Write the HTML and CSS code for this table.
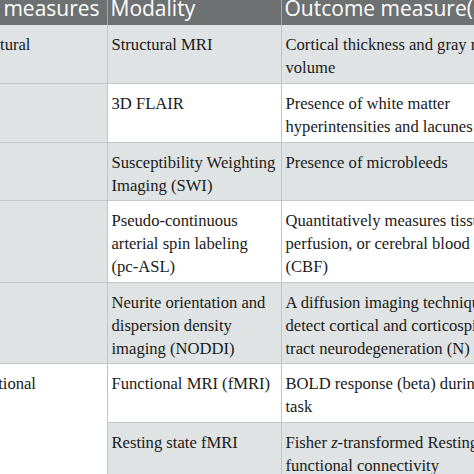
FILE: index.html
```html
<!DOCTYPE html>
<html>
<head>
<meta charset="utf-8">
<link rel="stylesheet" href="styles.css">
</head>
<body>
<div class="frame">
<table class="tbl">
  <colgroup>
    <col class="c1">
    <col class="c2">
    <col class="c3">
  </colgroup>
  <thead>
    <tr class="head">
      <th class="h1">Imaging measures</th>
      <th>Modality</th>
      <th>Outcome measure(s)</th>
    </tr>
  </thead>
  <tbody>
    <tr class="r1 shade">
      <td class="cat">Structural</td>
      <td>Structural MRI</td>
      <td>Cortical thickness and gray matter<br>volume</td>
    </tr>
    <tr class="r2">
      <td class="cat"></td>
      <td>3D FLAIR</td>
      <td>Presence of white matter<br>hyperintensities and lacunes</td>
    </tr>
    <tr class="r3 shade">
      <td class="cat"></td>
      <td>Susceptibility Weighting<br>Imaging (SWI)</td>
      <td>Presence of microbleeds</td>
    </tr>
    <tr class="r4">
      <td class="cat"></td>
      <td>Pseudo-continuous<br>arterial spin labeling<br>(pc-ASL)</td>
      <td>Quantitatively measures tissue<br>perfusion, or cerebral blood flow<br>(CBF)</td>
    </tr>
    <tr class="r5 shade">
      <td class="cat"></td>
      <td>Neurite orientation and<br>dispersion density<br>imaging (NODDI)</td>
      <td>A diffusion imaging technique to<br>detect cortical and corticospinal<br>tract neurodegeneration (N)</td>
    </tr>
    <tr class="r6">
      <td class="cat white" rowspan="2">Functional</td>
      <td>Functional MRI (fMRI)</td>
      <td>BOLD response (beta) during<br>task</td>
    </tr>
    <tr class="r7 shade">
      <td>Resting state fMRI</td>
      <td>Fisher <i>z</i>-transformed Resting state<br>functional connectivity</td>
    </tr>
  </tbody>
</table>
</div>
</body>
</html>
```

FILE: styles.css
```css
html, body {
  margin: 0;
  padding: 0;
  background: #ffffff;
}

.frame {
  width: 474px;
  height: 474px;
  overflow: hidden;
}

.tbl {
  margin-left: -73px;
  border-collapse: collapse;
  table-layout: fixed;
  width: 700px;
}

.c1 { width: 180px; }
.c2 { width: 174px; }
.c3 { width: 346px; }

.head th {
  background: #6d7171;
  color: #ffffff;
  font-family: "Open Sans", sans-serif;
  font-weight: 400;
  font-size: 21px;
  line-height: 16px;
  height: 16px;
  padding: 0 4px 9px 3px;
  text-align: left;
  vertical-align: top;
  white-space: nowrap;
  overflow: hidden;
  border-left: 1px solid #a3a7a7;
}

.head th.h1 {
  border-left: none;
  text-indent: -10px;
}

td {
  font-family: "Liberation Serif", "Times New Roman", serif;
  font-size: 16.6px;
  line-height: 23px;
  color: #1a1a1a;
  padding: 8px 4px 0 4px;
  vertical-align: top;
  text-align: left;
  white-space: nowrap;
  overflow: hidden;
  border-top: 1.5px solid #c3c8c8;
  border-left: 1px solid #bfc4c4;
  background: #ffffff;
}

tbody tr:first-child td {
  border-top: none;
}

.shade td {
  background: #dfe3e3;
}

td.cat {
  background: #dfe3e3;
  border-left: none;
  padding-left: 38px;
}

td.cat.white {
  background: #ffffff;
}

.r1 { height: 58px; }
.r2 { height: 59px; }
.r3 { height: 58px; }
.r4 { height: 82px; }
.r5 { height: 81px; }
.r6 { height: 59px; }
.r7 { height: 60px; }
```
